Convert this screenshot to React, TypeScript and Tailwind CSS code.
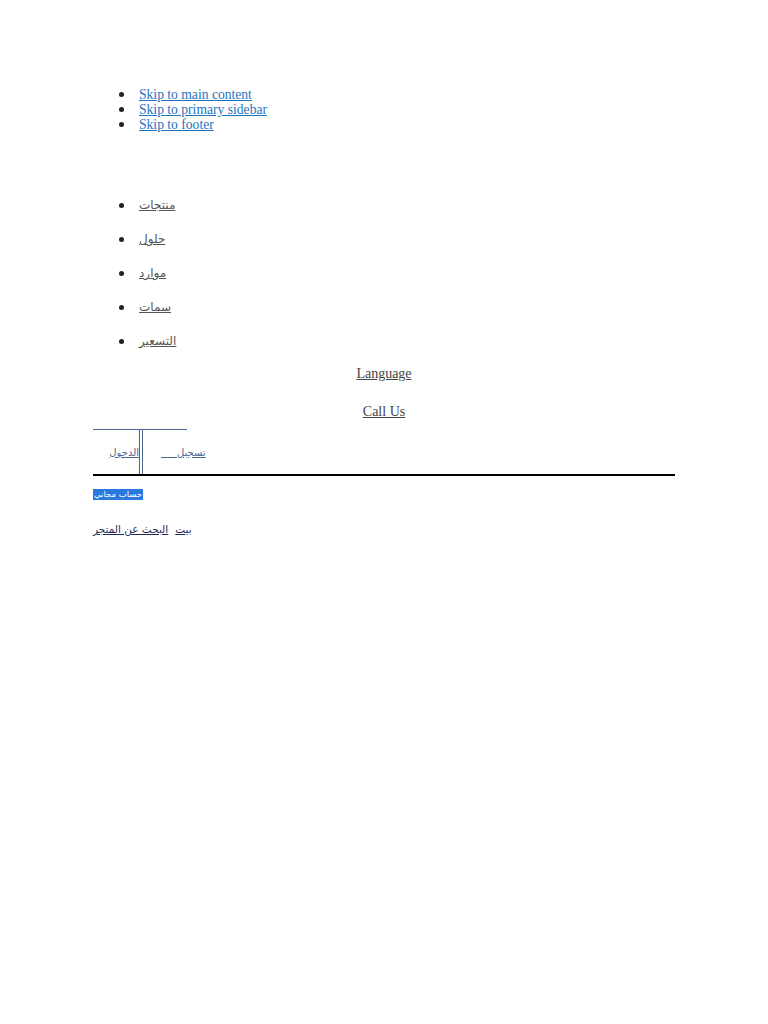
const skipLinks = [
  { href: "#main", label: "Skip to main content" },
  { href: "#sidebar", label: "Skip to primary sidebar" },
  { href: "#footer", label: "Skip to footer" },
];

const menu = ["منتجات", "حلول", "موارد", "سمات", "التسعير"];

const serif = "font-['Liberation_Serif','Times_New_Roman',serif]";
const arabic = "font-['DejaVu_Sans','Noto_Sans',sans-serif]";

function Bullet() {
  return (
    <span className="flex w-[20px] shrink-0 items-center">
      <span className="h-[5px] w-[5px] rounded-full bg-[#222]" />
    </span>
  );
}

export default function App() {
  return (
    <div className="min-h-[1024px] bg-white px-[93px] pt-[87px] text-black">
      {/* Skip links */}
      <ul className={`pl-[26px] text-[13.6px] leading-[15px] ${serif}`}>
        {skipLinks.map((l) => (
          <li key={l.href} className="flex">
            <Bullet />
            <a href={l.href} className="text-[#1e73be] underline">
              {l.label}
            </a>
          </li>
        ))}
      </ul>

      {/* Main menu */}
      <ul className={`mt-[63px] pl-[26px] text-[12px] leading-[20px] ${arabic}`}>
        {menu.map((m) => (
          <li key={m} className="mb-[14px] flex">
            <Bullet />
            <a href="#" className="text-[#555] underline">
              {m}
            </a>
          </li>
        ))}
      </ul>

      <div className={`text-center text-[14px] leading-[18px] ${serif}`}>
        <a href="#" className="text-[#444] underline">Language</a>
      </div>
      <div className={`mt-[20px] text-center text-[14px] leading-[18px] ${serif}`}>
        <a href="#" className="text-[#444] underline">Call Us</a>
      </div>

      {/* Login / sign up */}
      <div className={`mt-[8px] border-b-2 border-black ${arabic}`}>
        <div className="flex w-[94px] border-t border-[#4a6590] text-[10px] text-[#4a6590]">
          <div className="flex h-[44px] w-[46px] shrink-0 items-center justify-end">
            <a href="#" className="underline">الدخول</a>
          </div>
          <div className="w-[4px] shrink-0 border-x border-[#4a6590]" />
          <div className="flex h-[44px] shrink-0 items-center">
            <a href="#" className="whitespace-nowrap pl-[18px] underline">
              {"\u00a0\u00a0\u00a0\u00a0\u00a0"}تسجيل
            </a>
          </div>
        </div>
      </div>

      <div className={`mt-[13px] flex ${arabic}`}>
        <a href="#" className="bg-[#2878e0] px-[1px] text-[8.5px] leading-[11px] text-white">
          حساب مجاني
        </a>
      </div>

      <div className={`mt-[22px] flex gap-[7px] text-[10.5px] leading-[14px] ${arabic}`}>
        <a href="#" className="text-[#1f2b5a] underline">البحث عن المتجر</a>
        <a href="#" className="text-[#1f2b5a] underline">بيت</a>
      </div>
    </div>
  );
}
